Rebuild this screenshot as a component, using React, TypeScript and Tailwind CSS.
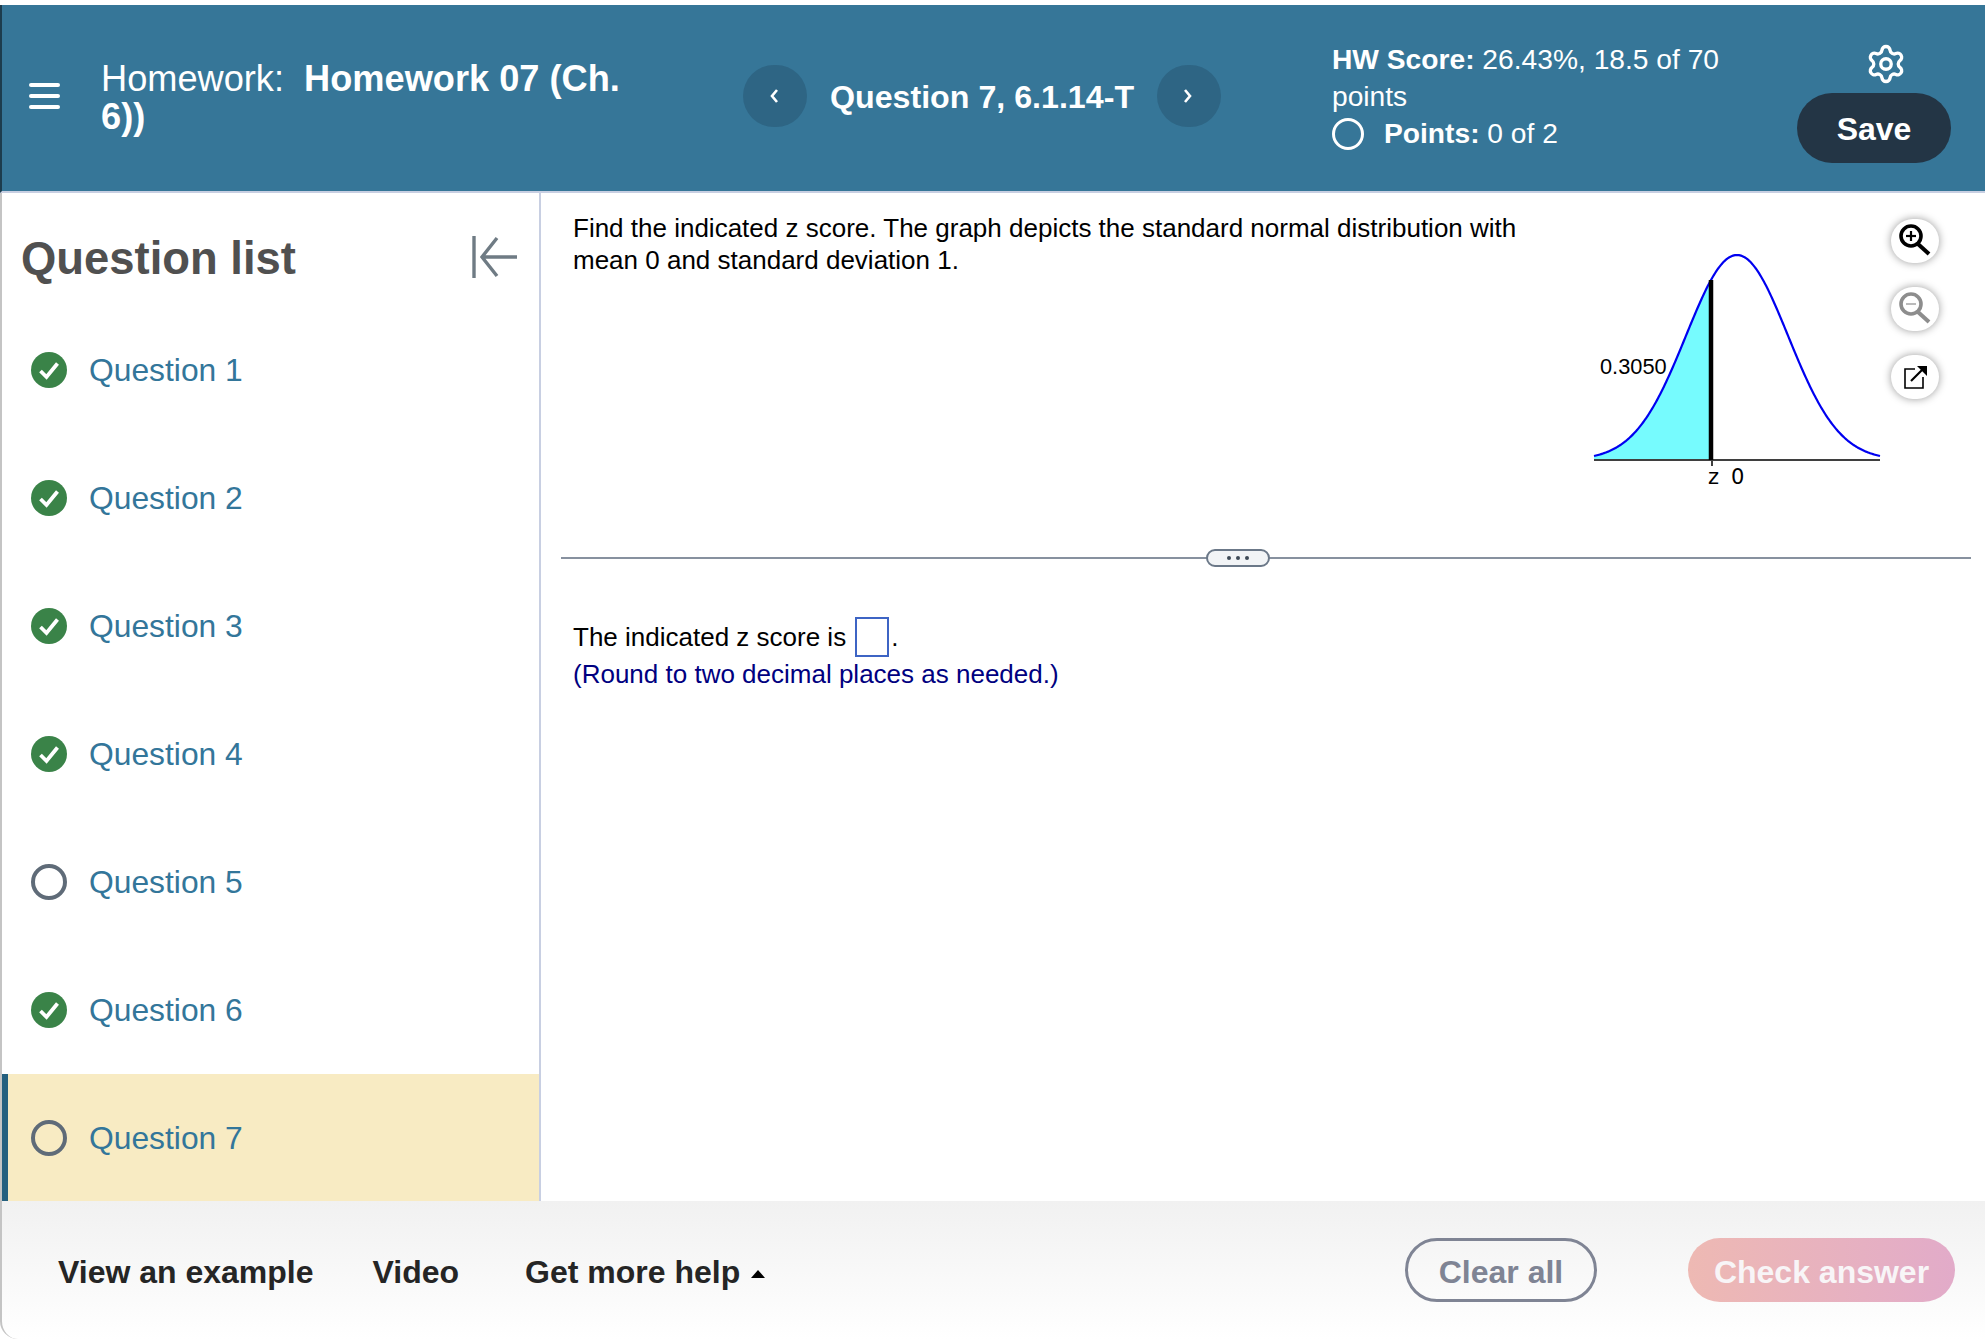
import { Settings } from 'lucide-react';

const questions = [
  { label: 'Question 1', done: true },
  { label: 'Question 2', done: true },
  { label: 'Question 3', done: true },
  { label: 'Question 4', done: true },
  { label: 'Question 5', done: false },
  { label: 'Question 6', done: true },
  { label: 'Question 7', done: false, current: true },
];

// standard normal curve, in the chart's own pixels
const MEAN = 147;
const SIGMA = 51;
const AXIS = 209;
const PEAK = 205;
const curveY = (x: number) => AXIS - PEAK * Math.exp(-((x - MEAN) ** 2) / (2 * SIGMA * SIGMA));
const xs = Array.from({ length: 287 }, (_, i) => 4 + i);
const curve = xs.map((x, i) => `${i === 0 ? 'M' : 'L'}${x} ${curveY(x).toFixed(2)}`).join(' ');
const shaded =
  xs
    .filter((x) => x <= 121)
    .map((x, i) => `${i === 0 ? 'M' : 'L'}${x} ${curveY(x).toFixed(2)}`)
    .join(' ') + ` L121 ${AXIS} L4 ${AXIS} Z`;

function CheckIcon() {
  return (
    <svg viewBox="0 0 36 36" className="w-9 h-9 shrink-0">
      <circle cx="18" cy="18" r="18" fill="#3a8348" />
      <path d="M9.5 19 L15.5 25 L26.5 11.5" fill="none" stroke="#fff" strokeWidth="3.8" />
    </svg>
  );
}

function OpenIcon() {
  return <div className="w-9 h-9 shrink-0 rounded-full border-4 border-[#5f6b78]" />;
}

function NormalChart() {
  return (
    <svg viewBox="0 0 296 240" className="w-[296px] h-[240px] shrink-0 mt-[58px]">
      <path d={shaded} fill="#76fbfe" />
      <line x1="4" y1={AXIS} x2="290" y2={AXIS} stroke="#3f3f3f" strokeWidth="2" />
      <line x1="122" y1={AXIS} x2="122" y2={AXIS + 6} stroke="#3f3f3f" strokeWidth="2" />
      <path d={curve} fill="none" stroke="#0000f0" strokeWidth="2.2" />
      <line x1="121" y1="29" x2="121" y2={AXIS} stroke="#000" strokeWidth="4.5" />
      <text x="10" y="123" fontSize="21.8" fill="#000" fontFamily="Liberation Sans, sans-serif">0.3050</text>
      <text x="118" y="233" fontSize="21" fill="#000" fontFamily="DejaVu Sans, sans-serif">z</text>
      <text x="141" y="233" fontSize="21" fill="#000" fontFamily="DejaVu Sans, sans-serif">0</text>
    </svg>
  );
}

function ZoomBtn({ minus }: { minus?: boolean }) {
  const c = minus ? '#8d8d8d' : '#000';
  return (
    <button className="w-12 h-11 rounded-full bg-white shadow-[0_0_8px_rgba(0,0,0,0.4)] flex items-center justify-center">
      <svg viewBox="0 0 34 34" className="w-[34px] h-[34px]">
        <circle cx="13" cy="12" r="10" fill="none" stroke={c} strokeWidth="3.6" />
        <line x1="20" y1="20" x2="31" y2="30" stroke={c} strokeWidth="4" />
        <line x1="8" y1="12" x2="18" y2="12" stroke={c} strokeWidth={minus ? 1.2 : 2.2} />
        {!minus && <line x1="13" y1="7" x2="13" y2="17" stroke={c} strokeWidth="2.2" />}
      </svg>
    </button>
  );
}

export default function App() {
  return (
    <div className="w-[1985px] h-[1339px] bg-white pt-[5px] flex flex-col overflow-hidden font-['Liberation_Sans',sans-serif]">
      <header className="h-[188px] shrink-0 bg-[#367698] border-b-2 border-[#c8cfe2] border-l-2 border-l-[#1d3c4d] flex items-center text-white">
        <div className="w-[27px] shrink-0" />
        <div className="w-[31px] shrink-0 flex flex-col gap-[7px] -mt-[4px]">
          <span className="h-1 bg-white rounded" />
          <span className="h-1 bg-white rounded" />
          <span className="h-1 bg-white rounded" />
        </div>
        <h1 className="w-[530px] shrink-0 ml-[41px] text-[36.2px] leading-[38px] -mt-[1px]">
          Homework:&nbsp; <span className="font-bold">Homework 07 (Ch. 6))</span>
        </h1>
        <div className="flex items-center ml-[112px] shrink-0 -mt-[4px]">
          <button className="w-16 h-[62px] rounded-full bg-[#2e6584] flex items-center justify-center pr-[2px]">
            <svg viewBox="0 0 10 16" className="w-[10px] h-[16px]">
              <path d="M8 2 L3 8 L8 14" fill="none" stroke="#fff" strokeWidth="2.6" />
            </svg>
          </button>
          <span className="w-[350px] text-center text-[32.2px] font-bold whitespace-nowrap mt-[2px]">Question 7, 6.1.14-T</span>
          <button className="w-16 h-[62px] rounded-full bg-[#2e6584] flex items-center justify-center pr-[2px]">
            <svg viewBox="0 0 10 16" className="w-[10px] h-[16px]">
              <path d="M2 2 L7 8 L2 14" fill="none" stroke="#fff" strokeWidth="2.6" />
            </svg>
          </button>
        </div>
        <div className="w-[400px] shrink-0 ml-[111px] text-[28.2px] leading-[36.7px] -mt-[3px]">
          <p>
            <span className="font-bold">HW Score:</span> 26.43%, 18.5 of 70 points
          </p>
          <p className="flex items-center">
            <span className="w-8 h-8 rounded-full border-[3px] border-white mr-[20px] mt-[2px]" />
            <span>
              <span className="font-bold">Points:</span> 0 of 2
            </span>
          </p>
        </div>
        <div className="w-[154px] shrink-0 ml-[65px] flex flex-col items-center mt-[9px]">
          <Settings className="w-[42px] h-[42px] mb-[8px] ml-[24px]" strokeWidth={1.9} />
          <button className="w-[154px] h-[70px] rounded-full bg-[#233545] text-[32px] font-bold pt-[2px]">Save</button>
        </div>
      </header>

      <div className="flex-1 flex min-h-0">
        <aside className="w-[541px] shrink-0 border-r-2 border-[#c8cfe2] border-l-2 border-l-[#c4c4c4] flex flex-col">
          <div className="h-[113px] shrink-0 flex items-center justify-between pl-[19px] pr-[21px]">
            <h2 className="text-[45.4px] font-bold text-[#505050] mt-[20px]">Question list</h2>
            <svg viewBox="0 0 46 42" className="w-[46px] h-[42px] mt-[14px]">
              <line x1="2" y1="0" x2="2" y2="42" stroke="#6f7b84" strokeWidth="3.4" />
              <path d="M25 2 L10 21 L25 40 M10 21 L45 21" fill="none" stroke="#6f7b84" strokeWidth="3.4" />
            </svg>
          </div>
          {questions.map((q) => (
            <div
              key={q.label}
              className={
                q.current
                  ? 'h-[128px] shrink-0 flex items-center gap-[22px] pl-[23px] bg-[#f8ebc3] border-l-[6px] border-[#25607f]'
                  : 'h-[128px] shrink-0 flex items-center gap-[22px] pl-[29px]'
              }
            >
              {q.done ? <CheckIcon /> : <OpenIcon />}
              <span className="text-[31.8px] text-[#33769a] mt-[1px]">{q.label}</span>
            </div>
          ))}
        </aside>

        <main className="flex-1 min-w-0 flex flex-col">
          <section className="h-[364px] shrink-0 flex pl-[32px] pr-[31px]">
            <p className="w-[1000px] shrink-0 mt-[19px] text-[26px] leading-[32px] text-black">
              Find the indicated z score. The graph depicts the standard normal distribution with mean 0 and standard
              deviation 1.
            </p>
            <div className="ml-[17px]">
              <NormalChart />
            </div>
            <div className="ml-[5px] mt-[26px] flex flex-col gap-6">
              <ZoomBtn />
              <ZoomBtn minus />
              <button className="w-12 h-11 rounded-full bg-white shadow-[0_0_8px_rgba(0,0,0,0.4)] flex items-center justify-center">
                <svg viewBox="0 0 26 24" className="w-[26px] h-[24px]">
                  <path d="M13 4 H3 V23 H21 V12" fill="none" stroke="#000" strokeWidth="1.6" />
                  <path d="M9 16 L21 4" stroke="#000" strokeWidth="2.2" />
                  <path d="M15 1 H25 V11 Z" fill="#000" />
                </svg>
              </button>
            </div>
          </section>

          <div className="ml-[20px] mr-[14px] relative h-[2px] bg-[#87919f] shrink-0">
            <div className="absolute left-[645px] -top-[8px] w-16 h-[18px] rounded-full bg-[#f2f4f6] border-2 border-[#6b7888] flex items-center justify-center gap-[5px]">
              <span className="w-1 h-1 rounded-full bg-[#3f4a57]" />
              <span className="w-1 h-1 rounded-full bg-[#3f4a57]" />
              <span className="w-1 h-1 rounded-full bg-[#3f4a57]" />
            </div>
          </div>

          <section className="pl-[32px] pt-[58px] text-[26px] leading-[32px]">
            <p className="flex items-center h-[40px] text-black">
              The indicated z score is
              <span className="w-[34px] h-[40px] border-2 border-[#3d64c4] ml-[9px] mr-[2px]" />
              <span>.</span>
            </p>
            <p className="text-[#000080] mt-[1px]">(Round to two decimal places as needed.)</p>
          </section>
        </main>
      </div>

      <footer className="h-[138px] shrink-0 bg-gradient-to-b from-[#f1f1f1] to-white border-l-2 border-[#c4c4c4] rounded-bl-[18px] flex items-center pl-[56px] pr-[30px] text-[32px] font-bold text-[#252525]">
        <button className="whitespace-nowrap mt-[4px]">View an example</button>
        <button className="ml-[59px] mt-[4px]">Video</button>
        <button className="ml-[66px] mt-[4px] flex items-center whitespace-nowrap">
          Get more help
          <span className="ml-[11px] mt-[4px] w-0 h-0 border-l-[7px] border-r-[7px] border-b-[8px] border-l-transparent border-r-transparent border-b-black" />
        </button>
        <button className="ml-auto w-[192px] h-[64px] rounded-full border-[3.5px] border-[#7f8494] text-[#7f8494] pt-[3px]">
          Clear all
        </button>
        <button className="ml-[91px] w-[267px] h-[64px] rounded-full bg-gradient-to-r from-[#eeb9b3] to-[#e2abc9] text-[#f8f5f7] pt-[3px]">
          Check answer
        </button>
      </footer>
    </div>
  );
}
